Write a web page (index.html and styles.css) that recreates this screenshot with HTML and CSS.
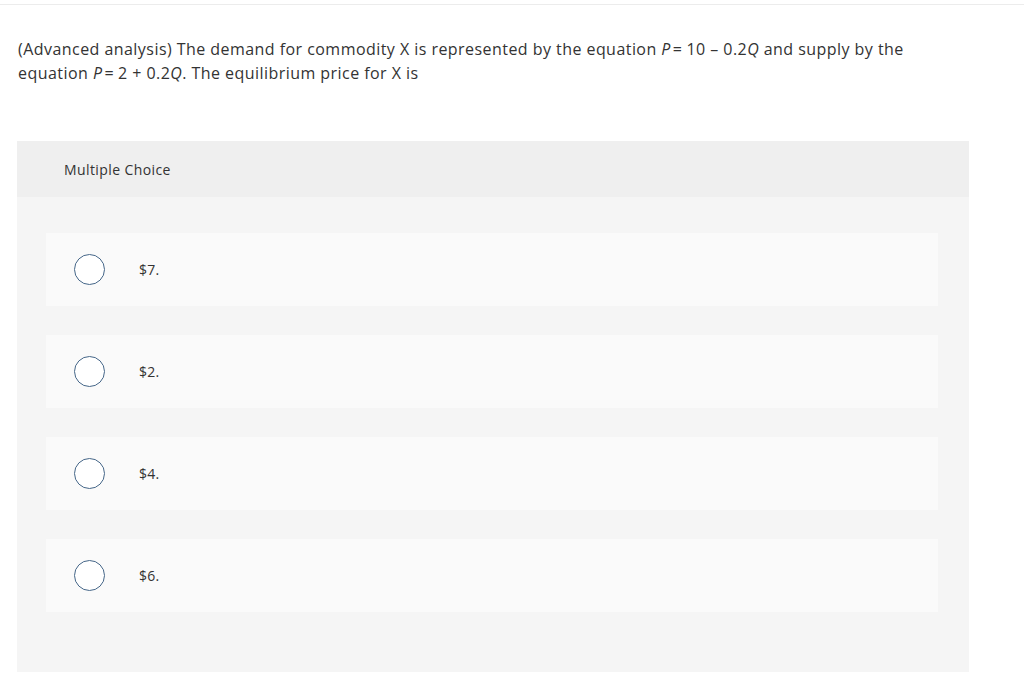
FILE: index.html
```html
<!DOCTYPE html>
<html>
<head>
<meta charset="utf-8">
<link rel="stylesheet" href="styles.css">
</head>
<body>
<div class="topline"></div>
<div class="page">
  <p class="question">(Advanced analysis) The demand for commodity X is represented by the equation <i>P</i><span class="eq">=</span>10 – 0.2<i>Q</i> and supply by the<br>equation <i>P</i><span class="eq">=</span>2 + 0.2<i>Q</i>. The equilibrium price for X is</p>
  <div class="card">
    <div class="card-head">Multiple Choice</div>
    <div class="card-body">
      <div class="option"><span class="radio"></span><span class="label">$7.</span></div>
      <div class="option"><span class="radio"></span><span class="label">$2.</span></div>
      <div class="option"><span class="radio"></span><span class="label">$4.</span></div>
      <div class="option"><span class="radio"></span><span class="label">$6.</span></div>
    </div>
  </div>
</div>
</body>
</html>
```
FILE: styles.css
```css
html, body {
  margin: 0;
  padding: 0;
  background: #ffffff;
}
body {
  font-family: "Open Sans", "Liberation Sans", sans-serif;
  color: #333333;
}
.topline {
  height: 1px;
  margin-top: 4px;
  background: #ececec;
}
.page {
  padding: 0 55px 0 17px;
}
.question {
  margin: 32px 0 0 1px;
  font-size: 16px;
  line-height: 24px;
  letter-spacing: 0.45px;
  color: #333;
}
.question i {
  font-style: italic;
}
.eq {
  margin: 0 4px 0 2px;
}
.card {
  margin-top: 56px;
  background: #f5f5f5;
}
.card-head {
  background: #efefef;
  height: 56px;
  display: flex;
  align-items: center;
  padding-left: 47px;
  font-size: 14px;
  letter-spacing: 0.4px;
  color: #333;
}
.card-body {
  padding: 36px 31px 60px 29px;
  display: flex;
  flex-direction: column;
  gap: 29px;
}
.option {
  background: #fafafa;
  height: 73px;
  display: flex;
  align-items: center;
  padding-left: 28px;
}
.radio {
  width: 29px;
  height: 29px;
  border: 1.5px solid #456688;
  border-radius: 50%;
  background: #fff;
  flex: none;
}
.label {
  margin-left: 34px;
  font-size: 14px;
  letter-spacing: 0.3px;
  color: #333;
}
```
